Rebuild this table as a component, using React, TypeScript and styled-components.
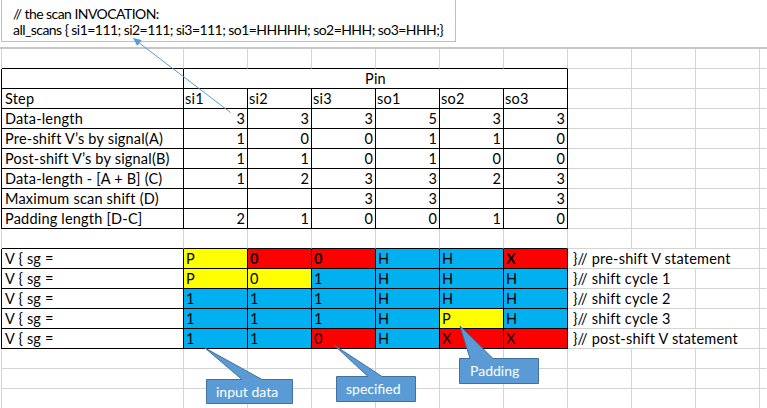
import React from 'react';
import styled, { createGlobalStyle } from 'styled-components';

const GRID = '#d4d4d4';
const INK = '#000000';
const BLUE = '#00b0f0';
const RED = '#ff0000';
const YELLOW = '#ffff00';

const GlobalStyle = createGlobalStyle`
  html, body { margin: 0; padding: 0; background: #fff; }
  body { font-family: Lato, "Open Sans", sans-serif; font-size: 14px; color: #000; }
`;

const Page = styled.div`
  position: relative;
  width: 767px;
  height: 408px;
  overflow: hidden;
  background: #fff;
`;

const TopStrip = styled.div`
  height: 47px;
  border-bottom: 2px solid #c6c6c6;
  display: flex;
  align-items: flex-start;
  padding-left: 1px;
`;

const NoteBox = styled.div`
  box-sizing: border-box;
  width: 455px;
  height: 42px;
  border: 1px solid #bfbfbf;
  border-top: none;
  padding: 6px 0 0 11px;
  line-height: 16px;
  font-size: 14px;
  letter-spacing: -0.55px;
  white-space: nowrap;
  background: #fff;
`;

const Sheet = styled.div`
  display: flex;
  flex-direction: column;
`;

const Row = styled.div`
  display: grid;
  grid-template-columns: 2px 182px repeat(9, 64px) 1fr;
  height: 20px;
`;

type Edge = 'grid' | 'ink' | 'none';
const edgeColor = (e?: Edge) => (e === 'ink' ? INK : e === 'none' ? 'transparent' : GRID);

const Cell = styled.div<{
  $span?: number;
  $right?: Edge;
  $bottom?: Edge;
  $fill?: string;
  $align?: 'left' | 'right' | 'center';
  $bold?: boolean;
  $indent?: number;
}>`
  grid-column: span ${(p) => p.$span ?? 1};
  box-sizing: border-box;
  min-width: 0;
  height: 20px;
  border-right: 1px solid ${(p) => edgeColor(p.$right)};
  border-bottom: 1px solid ${(p) => edgeColor(p.$bottom)};
  background: ${(p) => p.$fill ?? 'transparent'};
  text-align: ${(p) => p.$align ?? 'left'};
  padding: 0 2px 0 ${(p) => p.$indent ?? 2}px;
  font-size: 14.5px;
  letter-spacing: 0.2px;
  font-weight: ${(p) => (p.$bold ? 700 : 400)};
  line-height: 19px;
  white-space: nowrap;
`;

const Gutter = styled.div<{ $right: Edge }>`
  box-sizing: border-box;
  height: 20px;
  border-right: 1px solid ${(p) => edgeColor(p.$right)};
`;

const Overlay = styled.svg`
  position: absolute;
  left: 0;
  top: 0;
  width: 767px;
  height: 408px;
  pointer-events: none;
  overflow: visible;
`;

const CalloutLabel = styled.text`
  font-family: Lato, "Open Sans", sans-serif;
  font-size: 14px;
  fill: #ffffff;
`;

type Spec = {
  text?: string;
  span?: number;
  fill?: string;
  align?: 'left' | 'right' | 'center';
  bold?: boolean;
  right?: Edge;
  bottom?: Edge;
  indent?: number;
};

type RowSpec = { gutter: Edge; cells: Spec[] };

const TRACKS = 11;

const box = (s: Spec): Spec => ({ right: 'ink', bottom: 'ink', ...s });
const label = (t: string): Spec => box({ text: t, indent: 3 });
const head = (t: string): Spec => box({ text: t, indent: 1 });
const num = (t: string): Spec => box({ text: t, align: 'right' });
const ledge = (): Spec[] => Array.from({ length: 7 }, () => ({ bottom: 'ink' as Edge }));

const v = (t: string, fill: string, bold = false): Spec => box({ text: t, fill, bold, indent: 2 });
const note = (t: string, span: number): Spec => ({ text: t, span, indent: 5 });

const numRow = (name: string, vals: string[]): RowSpec => ({
  gutter: 'ink',
  cells: [label(name), ...vals.map(num)],
});

const rows: RowSpec[] = [
  { gutter: 'grid', cells: ledge() },
  { gutter: 'ink', cells: [box({}), box({ text: 'Pin', span: 6, align: 'center' })] },
  { gutter: 'ink', cells: [label('Step'), ...['si1', 'si2', 'si3', 'so1', 'so2', 'so3'].map(head)] },
  numRow('Data-length', ['3', '3', '3', '5', '3', '3']),
  numRow('Pre-shift V\u2019s by signal(A)', ['1', '0', '0', '1', '1', '0']),
  numRow('Post-shift V\u2019s by signal(B)', ['1', '1', '0', '1', '0', '0']),
  numRow('Data-length - [A + B] (C)', ['1', '2', '3', '3', '2', '3']),
  numRow('Maximum scan shift (D)', ['', '', '3', '3', '', '3']),
  numRow('Padding length [D-C]', ['2', '1', '0', '0', '1', '0']),
  { gutter: 'grid', cells: ledge() },
  {
    gutter: 'ink',
    cells: [
      label('V { sg ='),
      v('P', YELLOW),
      v('0', RED, true),
      v('0', RED, true),
      v('H', BLUE),
      v('H', BLUE),
      v('X', RED, true),
      note('}// pre-shift V statement', 3),
    ],
  },
  {
    gutter: 'ink',
    cells: [
      label('V { sg ='),
      v('P', YELLOW),
      v('0', YELLOW),
      v('1', BLUE),
      v('H', BLUE),
      v('H', BLUE),
      v('H', BLUE),
      note('}// shift cycle 1', 2),
    ],
  },
  {
    gutter: 'ink',
    cells: [
      label('V { sg ='),
      v('1', BLUE),
      v('1', BLUE),
      v('1', BLUE),
      v('H', BLUE),
      v('H', BLUE),
      v('H', BLUE),
      note('}// shift cycle 2', 2),
    ],
  },
  {
    gutter: 'ink',
    cells: [
      label('V { sg ='),
      v('1', BLUE),
      v('1', BLUE),
      v('1', BLUE),
      v('H', BLUE),
      v('P', YELLOW),
      v('H', BLUE),
      note('}// shift cycle 3', 2),
    ],
  },
  {
    gutter: 'ink',
    cells: [
      label('V { sg ='),
      v('1', BLUE),
      v('1', BLUE),
      v('0', RED),
      v('H', BLUE),
      v('X', RED),
      v('X', RED),
      note('}// post-shift V statement', 3),
    ],
  },
  { gutter: 'grid', cells: [] },
  { gutter: 'grid', cells: [] },
  { gutter: 'grid', cells: [] },
];

function fillRow(cells: Spec[]): Spec[] {
  const used = cells.reduce((n, c) => n + (c.span ?? 1), 0);
  const out = [...cells];
  for (let i = used; i < TRACKS; i++) out.push({});
  const last = out[out.length - 1];
  out[out.length - 1] = { ...last, right: 'none' };
  return out;
}

const Callout: React.FC<{ d: string; x: number; y: number; text: string }> = ({ d, x, y, text }) => (
  <g>
    <path d={d} fill="#5b9bd5" stroke="#41719c" strokeWidth={1} />
    <CalloutLabel x={x} y={y}>
      {text}
    </CalloutLabel>
  </g>
);

export default function App() {
  return (
    <Page>
      <GlobalStyle />
      <TopStrip>
        <NoteBox>
          <div>// the scan INVOCATION:</div>
          <div>all_scans {'{'} si1=111; si2=111; si3=111; so1=HHHHH; so2=HHH; so3=HHH;{'}'}</div>
        </NoteBox>
      </TopStrip>
      <Sheet>
        {rows.map((r, ri) => (
          <Row key={ri}>
            <Gutter $right={r.gutter} />
            {fillRow(r.cells).map((c, ci) => (
              <Cell
                key={ci}
                $span={c.span}
                $right={c.right}
                $bottom={c.bottom}
                $fill={c.fill}
                $align={c.align}
                $bold={c.bold}
                $indent={c.indent}
              >
                {c.text}
              </Cell>
            ))}
          </Row>
        ))}
      </Sheet>
      <Overlay viewBox="0 0 767 408">
        <line x1={230.5} y1={112.5} x2={138} y2={42} stroke="#5b9bd5" strokeWidth={1} />
        <polygon points="133,38 141.8,40 137.2,46" fill="#5b9bd5" />
        <Callout
          d="M206.5,379.5 H242 L205,348 L262,379.5 H292.5 V403.5 H206.5 Z"
          x={216}
          y={397}
          text="input data"
        />
        <Callout
          d="M336.5,376.5 H368 L334,345 L382,376.5 H415.5 V401.5 H336.5 Z"
          x={346}
          y={394}
          text="specified"
        />
        <Callout
          d="M459.5,358.5 H470 L460,326 L493,358.5 H538.5 V383.5 H459.5 Z"
          x={470}
          y={376}
          text="Padding"
        />
      </Overlay>
    </Page>
  );
}
